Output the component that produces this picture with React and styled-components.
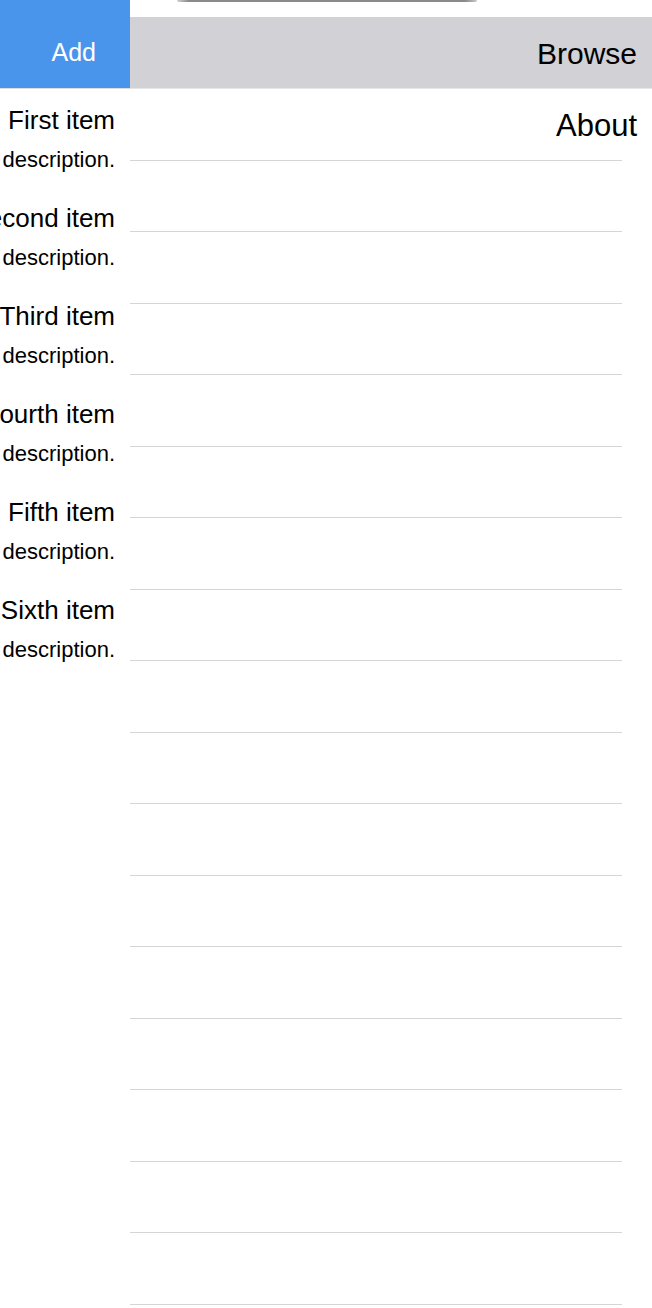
import React from "react";
import styled, { createGlobalStyle } from "styled-components";

const GlobalStyle = createGlobalStyle`
  html, body {
    margin: 0;
    padding: 0;
    background: #ffffff;
    overflow: hidden;
  }
  body {
    font-family: "Liberation Sans", Arial, sans-serif;
    color: #000;
  }
  * { box-sizing: border-box; }
`;

const Screen = styled.div`
  display: flex;
  width: 652px;
  height: 1308px;
  overflow: hidden;
  background: #fff;
`;

const Sidebar = styled.aside`
  width: 130px;
  flex-shrink: 0;
  overflow: hidden;
  display: flex;
  flex-direction: column;
`;

const AddBar = styled.div`
  height: 89px;
  flex-shrink: 0;
  background: #4a95ec;
  border-bottom: 1px solid #dcdcdc;
  display: flex;
  align-items: center;
  justify-content: flex-end;
  padding: 17px 34px 0 0;
`;

const AddLabel = styled.span`
  color: #ffffff;
  font-size: 25px;
  line-height: 1;
`;

const ItemList = styled.div`
  display: flex;
  flex-direction: column;
  padding-top: 15.5px;
`;

const Item = styled.div`
  height: 98px;
  flex-shrink: 0;
  display: flex;
  flex-direction: column;
  align-items: flex-end;
  padding-right: 15px;
`;

const ItemTitle = styled.div`
  font-size: 26px;
  line-height: 31.2px;
  white-space: nowrap;
  display: flex;
  justify-content: flex-end;
  width: 100%;
`;

const ItemDesc = styled.div`
  font-size: 22px;
  line-height: 26.4px;
  margin-top: 11.5px;
  white-space: nowrap;
  display: flex;
  justify-content: flex-end;
  width: 100%;
`;

const Main = styled.main`
  flex: 1;
  display: flex;
  flex-direction: column;
  min-width: 0;
`;

const TopStrip = styled.div`
  height: 17px;
  flex-shrink: 0;
  padding-left: 47px;
`;

const Grabber = styled.div`
  width: 300px;
  height: 2px;
  background: linear-gradient(90deg, #d0d0d0 0%, #8a8a8a 4%, #8a8a8a 96%, #c8c8c8 100%);
  border-radius: 0 0 3px 3px;
`;

const NavBar = styled.div`
  height: 72px;
  flex-shrink: 0;
  background: #d1d1d6;
  border-bottom: 1px solid #e6e6e8;
  display: flex;
  align-items: center;
  justify-content: flex-end;
  padding: 2px 15px 0 0;
`;

const NavTitle = styled.span`
  font-size: 30px;
  line-height: 1;
`;

const Row = styled.div`
  height: 70.5px;
  flex-shrink: 0;
  display: flex;
  align-items: center;
  justify-content: flex-end;
  padding: 3px 15px 0 0;
`;

const RowLabel = styled.span`
  font-size: 31px;
  line-height: 1;
`;

const Separator = styled.div`
  height: 1px;
  flex-shrink: 0;
  margin-right: 30px;
  background: #d5d5d7;
`;

const items = ["First", "Second", "Third", "Fourth", "Fifth", "Sixth"];

export default function App() {
  const rows = Array.from({ length: 17 }, (_, i) => i);
  return (
    <>
      <GlobalStyle />
      <Screen>
        <Sidebar>
          <AddBar>
            <AddLabel>Add</AddLabel>
          </AddBar>
          <ItemList>
            {items.map((name) => (
              <Item key={name}>
                <ItemTitle>
                  <span>{name} item</span>
                </ItemTitle>
                <ItemDesc>
                  <span>This is an item description.</span>
                </ItemDesc>
              </Item>
            ))}
          </ItemList>
        </Sidebar>
        <Main>
          <TopStrip>
            <Grabber />
          </TopStrip>
          <NavBar>
            <NavTitle>Browse</NavTitle>
          </NavBar>
          {rows.map((i) => (
            <React.Fragment key={i}>
              <Row>{i === 0 && <RowLabel>About</RowLabel>}</Row>
              <Separator />
            </React.Fragment>
          ))}
        </Main>
      </Screen>
    </>
  );
}
